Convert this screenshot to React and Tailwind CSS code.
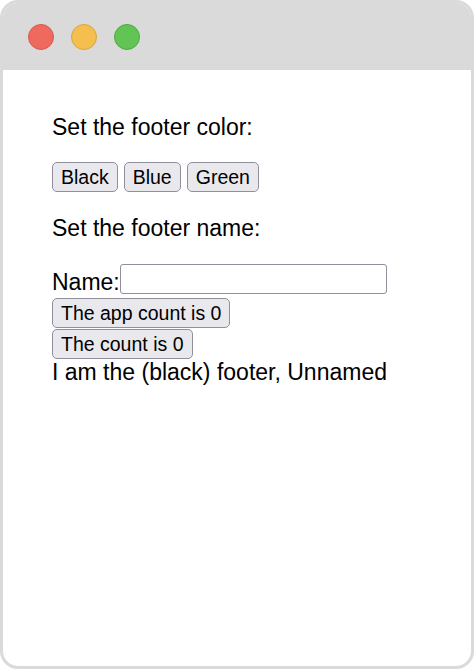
import React, { useState } from "react";

const COLORS = ["Black", "Blue", "Green"];

const Footer = ({ color, name }) => (
  <div className="leading-[26px]">
    I am the ({color}) footer, {name || "Unnamed"}
  </div>
);

const App = () => {
  const [color, setColor] = useState("black");
  const [name, setName] = useState("");
  const [appCount, setAppCount] = useState(0);
  const [count, setCount] = useState(0);

  const btn =
    "h-[30px] px-[8px] border border-[#8f8f9d] rounded-[5px] bg-[#e9e9ed] text-[19.5px] leading-[22px] text-black";

  return (
    <div className="w-[474px] h-[669px] bg-white font-['Liberation_Sans',Arial,sans-serif] text-black">
      <div className="w-full h-full flex flex-col border-[3px] border-[#dadada] rounded-[18px] overflow-hidden">
        {/* title bar */}
        <div className="h-[67px] shrink-0 bg-[#dadada] flex items-start gap-[17px] pl-[25px] pt-[21px]">
          <span className="w-[26px] h-[26px] rounded-full bg-[#ee6a5f] border border-[#d8574c]" />
          <span className="w-[26px] h-[26px] rounded-full bg-[#f5bf4f] border border-[#d9a53c]" />
          <span className="w-[26px] h-[26px] rounded-full bg-[#61c454] border border-[#4ea843]" />
        </div>

        {/* content */}
        <div className="flex-1 pl-[49px] pt-[44px] text-[23px]">
          <p className="leading-[26px]">Set the footer color:</p>
          <div className="flex gap-[6px] mt-[22px]">
            {COLORS.map((c) => (
              <button
                key={c}
                className={btn}
                onClick={() => setColor(c.toLowerCase())}
              >
                {c}
              </button>
            ))}
          </div>
          <p className="leading-[26px] mt-[23px]">Set the footer name:</p>
          <div className="flex items-end mt-[23px]">
            <span className="leading-[26px]">Name:</span>
            <input
              value={name}
              onChange={(e) => setName(e.target.value)}
              className="w-[267px] h-[30px] mb-[1px] border border-[#8f8f9d] rounded-[3px] bg-white px-1 text-[19px] outline-none"
            />
          </div>
          <div className="flex mt-[3px]">
            <button className={btn} onClick={() => setAppCount(appCount + 1)}>
              The app count is {appCount}
            </button>
          </div>
          <div className="flex mt-[1px]">
            <button className={btn} onClick={() => setCount(count + 1)}>
              The count is {count}
            </button>
          </div>
          <Footer color={color} name={name} />
        </div>
      </div>
    </div>
  );
};

export default App;
